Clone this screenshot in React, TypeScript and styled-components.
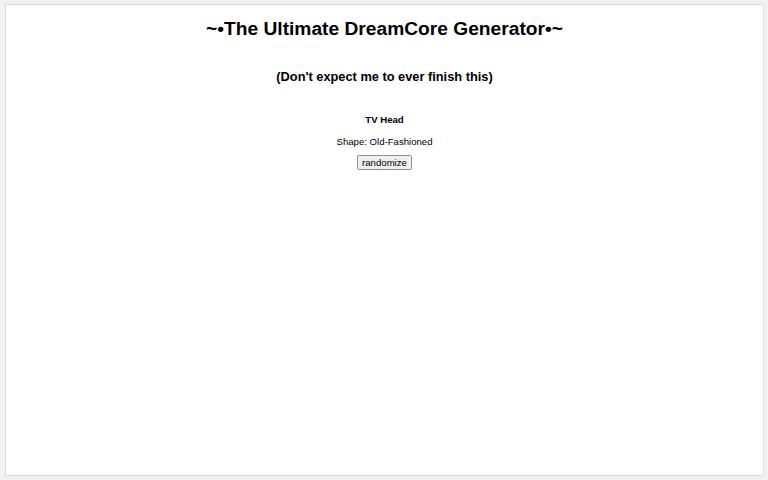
import React from 'react';
import styled, {createGlobalStyle} from "styled-components";

const GlobalStyle = createGlobalStyle`
    html, body {
        margin: 0;
        padding: 0;
        background: #f2f2f2;
        font-family: "Liberation Sans", Arial, sans-serif;
    }
`

export default function App() {
    return (
        <>
            <GlobalStyle/>
            <Page>
                <Title>~•The Ultimate DreamCore Generator•~</Title>
                <Subtitle>(Don't expect me to ever finish this)</Subtitle>
                <Section>
                    <PartName>TV Head</PartName>
                    <PartInfo>Shape: Old-Fashioned</PartInfo>
                    <RandomButton>randomize</RandomButton>
                </Section>
            </Page>
        </>
    );
}

const Page = styled.div`
    box-sizing: border-box;
    margin: 4px 4px 0 5px;
    height: 472px;
    background: #fff;
    border: 1px solid #dcdcdc;
    display: flex;
    flex-direction: column;
    align-items: center;
    color: #000;
`

const Title = styled.h1`
    font-size: 19.2px;
    font-weight: 700;
    margin: 13px 0 0 0;
`

const Subtitle = styled.h2`
    font-size: 12.8px;
    font-weight: 700;
    margin: 29px 0 0 0;
`

const Section = styled.div`
    display: flex;
    flex-direction: column;
    align-items: center;
    margin-top: 30px;
`

const PartName = styled.div`
    font-size: 9.6px;
    font-weight: 700;
`

const PartInfo = styled.div`
    font-size: 9.6px;
    margin-top: 11px;
`

const RandomButton = styled.button`
    font-family: "Liberation Sans", Arial, sans-serif;
    font-size: 9.6px;
    line-height: 11px;
    margin-top: 8px;
    padding: 1px 4px;
    background: #efefef;
    border: 1px solid #8f8f8f;
    border-radius: 2px;
    color: #000;
`
